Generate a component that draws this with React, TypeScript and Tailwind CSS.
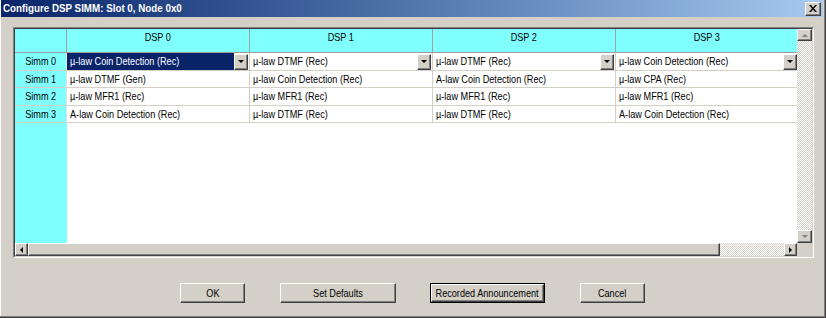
import React from "react";

const font = "font-['Liberation_Sans',sans-serif] text-[11px] leading-[13px]";

const rows = [
  ["µ-law Coin Detection (Rec)", "µ-law DTMF (Rec)", "µ-law DTMF (Rec)", "µ-law Coin Detection (Rec)"],
  ["µ-law DTMF (Gen)", "µ-law Coin Detection (Rec)", "A-law Coin Detection (Rec)", "µ-law CPA (Rec)"],
  ["µ-law MFR1 (Rec)", "µ-law MFR1 (Rec)", "µ-law MFR1 (Rec)", "µ-law MFR1 (Rec)"],
  ["A-law Coin Detection (Rec)", "µ-law DTMF (Rec)", "µ-law DTMF (Rec)", "A-law Coin Detection (Rec)"],
];
const rowHeights = ["h-[18px]", "h-[17px]", "h-[18px]", "h-[17px]"];

const raised =
  "border border-t-white border-l-white border-r-[#404040] border-b-[#404040] shadow-[inset_-1px_-1px_#808080] bg-[#d4d0c8]";
const checker =
  "bg-[image:repeating-conic-gradient(#d4d0c8_0%_25%,#ffffff_0%_50%)] bg-[length:2px_2px]";

// the dialog font is a narrow bitmap face; squeeze Liberation Sans to its width
function Narrow({ children, center }: { children: React.ReactNode; center?: boolean }) {
  return (
    <span className={`inline-block whitespace-nowrap scale-x-[0.83] ${center ? "origin-center" : "origin-left"}`}>
      {children}
    </span>
  );
}

function Arrow({ dir, color = "#000" }: { dir: "up" | "down" | "left" | "right"; color?: string }) {
  const pts = {
    up: "0,3 3,0 6,3",
    down: "0,0 6,0 3,3",
    left: "3,0 3,6 0,3",
    right: "0,0 0,6 3,3",
  }[dir];
  const vertical = dir === "up" || dir === "down";
  return (
    <svg width={vertical ? 6 : 3} height={vertical ? 3 : 6} viewBox={vertical ? "0 0 6 3" : "0 0 3 6"}>
      <polygon points={pts} fill={color} />
    </svg>
  );
}

function ComboButton() {
  return (
    <div className={`${raised} w-[14px] h-[16px] shrink-0 mr-[1px] flex items-center justify-center`}>
      <Arrow dir="down" />
    </div>
  );
}

function DataCell({ text, row, col }: { text: string; row: number; col: number }) {
  const selected = row === 0 && col === 0;
  return (
    <div className={`w-[183px] shrink-0 border-r border-b border-[#d4d0c8] flex items-center ${rowHeights[row]}`}>
      <div
        className={`flex-1 h-full flex items-center pl-[3px] overflow-hidden ${
          selected ? "bg-[#0a246a] text-white" : "text-black"
        }`}
      >
        <Narrow>{text}</Narrow>
      </div>
      {row === 0 && <ComboButton />}
    </div>
  );
}

function WinButton({ label, width, isDefault }: { label: string; width: string; isDefault?: boolean }) {
  return (
    <div className={`${width} h-[20px] ${isDefault ? "border border-black" : ""}`}>
      <div className={`${raised} w-full h-full flex items-center justify-center text-black`}>
        <Narrow center>{label}</Narrow>
      </div>
    </div>
  );
}

export default function App() {
  return (
    <div
      className={`${font} w-[826px] h-[318px] bg-[#d4d0c8] flex flex-col shadow-[inset_-1px_-1px_#404040,inset_-2px_-2px_#808080,inset_1px_0_#ffffff]`}
    >
      <div className="h-[17px] mr-[3px] ml-[1px] bg-gradient-to-r from-[#0a246a] to-[#a6caf0] flex items-center justify-between pl-[2px] pr-[2px]">
        <span className="inline-block whitespace-nowrap scale-x-[0.89] origin-left font-bold text-[11px] text-white">
          Configure DSP SIMM: Slot 0, Node 0x0
        </span>
        <div className={`${raised} w-[16px] h-[14px] flex items-center justify-center`}>
          <svg width="8" height="7" viewBox="0 0 8 7">
            <path d="M0 0 L2 0 L4 2.5 L6 0 L8 0 L5 3.5 L8 7 L6 7 L4 4.5 L2 7 L0 7 L3 3.5 Z" fill="#000" />
          </svg>
        </div>
      </div>

      <div className="mt-[10px] ml-[13px] w-[801px] h-[231px] border border-t-[#808080] border-l-[#808080] border-r-white border-b-white">
        <div className="w-full h-full border border-t-[#404040] border-l-[#404040] border-r-[#d4d0c8] border-b-[#d4d0c8] flex flex-col">
          <div className="flex h-[214px]">
            <div className="flex flex-1 overflow-hidden">
              <div className="w-[52px] shrink-0 bg-[#80ffff] flex flex-col">
                <div className="h-[24px] border-r border-b border-[#a0a0a0]" />
                {rows.map((_, i) => (
                  <div
                    key={i}
                    className={`${rowHeights[i]} border-r border-b border-r-[#e0e0e0] border-b-[#d4d0c8] flex items-center justify-center text-black`}
                  >
                    <Narrow center>Simm {i}</Narrow>
                  </div>
                ))}
              </div>
              <div className="flex-1 bg-white flex flex-col overflow-hidden">
                <div className="flex h-[24px] bg-[#80ffff]">
                  {[0, 1, 2, 3].map((c) => (
                    <div
                      key={c}
                      className="w-[183px] shrink-0 border-r border-b border-[#a0a0a0] flex justify-center pt-[2px] text-black"
                    >
                      <Narrow center>DSP {c}</Narrow>
                    </div>
                  ))}
                </div>
                {rows.map((r, ri) => (
                  <div key={ri} className="flex">
                    {r.map((t, ci) => (
                      <DataCell key={ci} text={t} row={ri} col={ci} />
                    ))}
                  </div>
                ))}
              </div>
            </div>
            <div className="w-[15px] shrink-0 flex flex-col">
              <div className={`${raised} h-[12px] flex items-center justify-center`}>
                <Arrow dir="up" color="#808080" />
              </div>
              <div className={`flex-1 ${checker}`} />
              <div className={`${raised} h-[13px] flex items-center justify-center`}>
                <Arrow dir="down" color="#808080" />
              </div>
            </div>
          </div>
          <div className="flex h-[13px]">
            <div className="flex w-[782px]">
              <div className={`${raised} w-[13px] flex items-center justify-center`}>
                <Arrow dir="left" />
              </div>
              <div className={`${raised} w-[692px]`} />
              <div className={`flex-1 ${checker}`} />
              <div className={`${raised} w-[13px] flex items-center justify-center`}>
                <Arrow dir="right" />
              </div>
            </div>
            <div className="flex-1 bg-[#d4d0c8]" />
          </div>
        </div>
      </div>

      <div className="flex mt-[25px] pl-[180px]">
        <WinButton label="OK" width="w-[65px]" />
        <div className="w-[35px]" />
        <WinButton label="Set Defaults" width="w-[116px]" />
        <div className="w-[34px]" />
        <WinButton label="Recorded Announcement" width="w-[115px]" isDefault />
        <div className="w-[35px]" />
        <WinButton label="Cancel" width="w-[65px]" />
      </div>
    </div>
  );
}
